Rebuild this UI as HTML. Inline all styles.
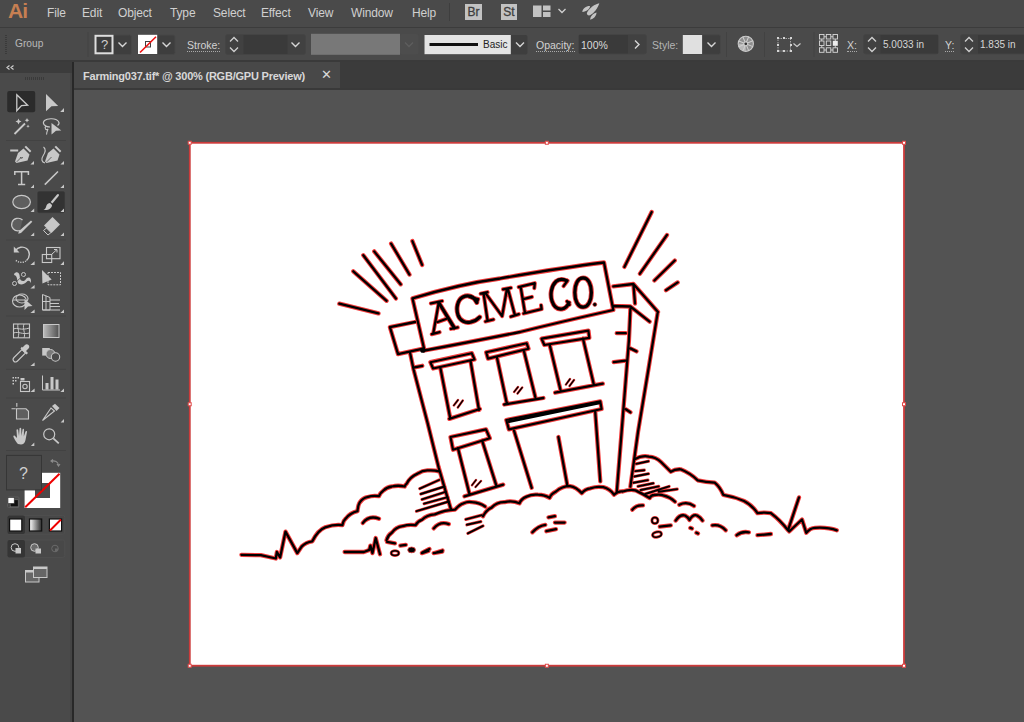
<!DOCTYPE html>
<html><head><meta charset="utf-8">
<style>
*{margin:0;padding:0;box-sizing:border-box}
html,body{width:1024px;height:722px;overflow:hidden;background:#535353;font-family:"Liberation Sans",sans-serif}
.a{position:absolute}
#menubar{left:0;top:0;width:1024px;height:27px;background:#4a4a4a}
#menusep{left:0;top:27px;width:1024px;height:1px;background:#3c3c3c}
#ctrl{left:0;top:28px;width:1024px;height:33px;background:#4a4a4a}
#ctrlsep{left:0;top:60px;width:1024px;height:2px;background:#3a3a3a}
.menu{top:6px;font-size:12px;letter-spacing:-0.15px;color:#d0d0d0;white-space:nowrap}
#tabbar{left:74px;top:62px;width:950px;height:27px;background:#3b3b3b}
#tab{left:74px;top:62px;width:266px;height:27px;background:#484848}
#tabline{left:74px;top:88px;width:950px;height:2px;background:#393939}
#canvas{left:74px;top:90px;width:950px;height:632px;background:#535353}
#tools{left:0;top:62px;width:72px;height:660px;background:#4a4a4a}
#toolshead{left:0;top:62px;width:72px;height:11px;background:#3c3c3c}
#toolsborder{left:72px;top:62px;width:2px;height:660px;background:#282828}
.ul{border-bottom:1px dotted #aaa;line-height:12px}
</style></head><body>
<div class="a" id="menubar"></div>
<div class="a" id="menusep"></div>
<div class="a" id="ctrl"></div>
<div class="a" id="ctrlsep"></div>
<div class="a" id="tabbar"></div>
<div class="a" id="tab"></div>
<div class="a" id="tabline"></div>
<div class="a" id="canvas"></div>
<div class="a" id="tools"></div>
<div class="a" id="toolshead"></div>
<div class="a" id="toolsborder"></div>
<div class="a" style="left:70px;top:73px;width:2px;height:649px;background:#444"></div>

<!-- menu -->
<div class="a" style="left:8px;top:-1px;font-size:21px;font-weight:bold;color:#c67f52;letter-spacing:-0.8px">Ai</div>
<div class="a menu" style="left:47px">File</div>
<div class="a menu" style="left:82px">Edit</div>
<div class="a menu" style="left:118px">Object</div>
<div class="a menu" style="left:170px">Type</div>
<div class="a menu" style="left:213px">Select</div>
<div class="a menu" style="left:261px">Effect</div>
<div class="a menu" style="left:308px">View</div>
<div class="a menu" style="left:351px">Window</div>
<div class="a menu" style="left:412px">Help</div>


<!-- menubar icons -->
<div class="a" style="left:449px;top:3px;width:1px;height:18px;background:#3e3e3e"></div>
<div class="a" style="left:465px;top:4px;width:17px;height:16px;background:#c2c2c2;color:#3e3e3e;font-size:12px;text-align:center;line-height:16px;-webkit-text-stroke:0.3px #3e3e3e">Br</div>
<div class="a" style="left:501px;top:4px;width:16px;height:16px;background:#c2c2c2;color:#3e3e3e;font-size:12px;text-align:center;line-height:16px;-webkit-text-stroke:0.3px #3e3e3e">St</div>
<svg class="a" style="left:530px;top:2px" width="75" height="22">
 <rect x="3" y="3.5" width="8.5" height="11.5" fill="#c2c2c2"/>
 <rect x="13" y="3.5" width="7.5" height="5" fill="#c2c2c2"/>
 <rect x="13" y="10" width="7.5" height="5" fill="#c2c2c2"/>
 <path d="M28.5 7 L32 10.5 L35.5 7" stroke="#d0d0d0" stroke-width="1.3" fill="none"/>
 <path d="M69.3 1.2 C65 2 59 6 57 10.7 C56.5 12 57.5 13.8 60 13.3 C64 11 68 6 69.3 1.2 Z" fill="#c4c4c4"/>
 <path d="M52.3 9.9 C52.8 6.5 56 4 60 4.1 C59.8 7.2 56.5 9.9 52.3 9.9 Z" fill="#c4c4c4"/>
 <path d="M60.2 17.8 C60.2 14.5 63 11.5 66.5 10.6 C66.5 14 63.5 17.2 60.2 17.8 Z" fill="#c4c4c4"/>
</svg>

<!-- control bar -->
<svg class="a" style="left:0;top:28px" width="1024" height="33">
 <g fill="#3a3a3a"><rect x="5" y="7" width="2" height="1"/><rect x="5" y="9" width="2" height="1"/><rect x="5" y="11" width="2" height="1"/><rect x="5" y="13" width="2" height="1"/><rect x="5" y="15" width="2" height="1"/><rect x="5" y="17" width="2" height="1"/><rect x="5" y="19" width="2" height="1"/><rect x="5" y="21" width="2" height="1"/><rect x="5" y="23" width="2" height="1"/><rect x="5" y="25" width="2" height="1"/></g>
 <rect x="87.5" y="4" width="1" height="25" fill="#424242"/>
 <!-- fill swatch -->
 <rect x="94.5" y="7" width="37" height="19.5" rx="2" fill="#3e3e3e" stroke="#464646" stroke-width="1"/>
 <rect x="95.5" y="7.8" width="17" height="17.5" fill="#3c3c3c" stroke="#dedede" stroke-width="2"/>
 <path d="M118.5 14.5 L122.5 18.5 L126.5 14.5" stroke="#d6d6d6" stroke-width="1.4" fill="none"/>
 <!-- stroke swatch -->
 <rect x="138" y="7" width="37" height="19.5" rx="2" fill="#3e3e3e" stroke="#464646" stroke-width="1"/>
 <rect x="138" y="6.8" width="19.2" height="19.2" fill="#ffffff"/>
 <rect x="145.5" y="13.5" width="5" height="5.5" fill="none" stroke="#404040" stroke-width="1"/>
 <path d="M140 24.5 L156 8.8" stroke="#ee1111" stroke-width="1.6"/>
 <path d="M162.5 14.5 L166.5 18.5 L170.5 14.5" stroke="#d6d6d6" stroke-width="1.4" fill="none"/>
 <!-- stroke spinner -->
 <rect x="225.5" y="6.5" width="80" height="20" rx="2.5" fill="#414141" stroke="#444" stroke-width="1"/>
 <rect x="243.5" y="7" width="44" height="19" fill="#3a3a3a"/>
 <path d="M230 13.5 L234 9.5 L238 13.5 M230 19.5 L234 23.5 L238 19.5" stroke="#d0d0d0" stroke-width="1.3" fill="none"/>
 <path d="M291.5 14.5 L295.5 18.5 L299.5 14.5" stroke="#d6d6d6" stroke-width="1.4" fill="none"/>
 <rect x="311" y="5.8" width="89" height="21" fill="#787878"/>
 <rect x="400" y="6" width="18.5" height="20.5" rx="2" fill="#4d4d4d"/>
 <path d="M405 14.5 L409 18.5 L413 14.5" stroke="#5e5e5e" stroke-width="1.3" fill="none"/>
 <!-- brush -->
 <rect x="424.5" y="7" width="103" height="19.5" rx="2" fill="#3e3e3e"/>
 <rect x="424.5" y="7" width="86.3" height="19.2" fill="#e4e4e4"/>
 <rect x="429.5" y="15" width="48.5" height="3" fill="#111"/>
 <path d="M516 14.5 L520 18.5 L524 14.5" stroke="#d6d6d6" stroke-width="1.4" fill="none"/>
 <!-- opacity -->
 <rect x="578.5" y="6.5" width="68" height="19.5" rx="2.5" fill="#414141" stroke="#444" stroke-width="1"/>
 <rect x="579" y="7" width="49" height="18.5" fill="#3a3a3a"/>
 <path d="M635 12.5 L639 16.5 L635 20.5" stroke="#d6d6d6" stroke-width="1.4" fill="none"/>
 <!-- style -->
 <rect x="682.5" y="6.8" width="38" height="19.5" rx="2" fill="#3e3e3e" stroke="#464646" stroke-width="1"/>
 <rect x="682.8" y="7" width="19.3" height="19" fill="#e0e0e0"/>
 <path d="M707.5 14.5 L711.5 18.5 L715.5 14.5" stroke="#d6d6d6" stroke-width="1.4" fill="none"/>
 <rect x="726" y="4" width="1" height="25" fill="#424242"/>
 <!-- globe -->
 <circle cx="745.8" cy="15.8" r="7.6" fill="#8e8e8e" stroke="#cccccc" stroke-width="1.1"/>
 <path d="M745.8 15.8 L738.4 15.8 A7.4 7.4 0 0 0 740.6 21.1 Z M745.8 15.8 L740.6 21.1 A7.4 7.4 0 0 0 745.8 23.2 Z" fill="#b8b8b8"/>
 <g stroke="#cfcfcf" stroke-width="1" transform="rotate(22 745.8 15.8)">
  <path d="M745.8 15.8 L745.8 8.2 M745.8 15.8 L751.2 10.4 M745.8 15.8 L753.4 15.8 M745.8 15.8 L751.2 21.2 M745.8 15.8 L745.8 23.4 M745.8 15.8 L740.4 21.2 M745.8 15.8 L738.2 15.8 M745.8 15.8 L740.4 10.4"/>
 </g>
 <circle cx="745.8" cy="15.8" r="2.4" fill="#cfcfcf"/>
 <circle cx="745.8" cy="15.8" r="1.4" fill="#333"/>
 <rect x="764" y="4" width="1" height="25" fill="#424242"/>
 <!-- transform icon -->
 <rect x="778" y="38.5" width="12.5" height="12.5" fill="none" stroke="#bdbdbd" stroke-width="0.8" stroke-dasharray="1.5 1" transform="translate(0,-28)"/>
 <g fill="#d4d4d4"><rect x="777" y="9" width="2" height="2"/><rect x="783" y="9" width="2" height="2"/><rect x="790" y="9" width="2" height="2"/><rect x="777" y="16" width="2" height="2"/><rect x="790" y="16" width="2" height="2"/><rect x="777" y="22" width="2" height="2"/><rect x="783" y="22" width="2" height="2"/><rect x="790" y="22" width="2" height="2"/></g>
 <path d="M793.5 15.5 L797 18.5 L800.5 15.5" stroke="#cfcfcf" stroke-width="1.1" fill="none"/>
 <rect x="813.5" y="4" width="1" height="25" fill="#424242"/>
 <!-- ref point -->
 <g fill="none" stroke="#d8d8d8" stroke-width="0.9">
  <rect x="819.5" y="6.5" width="4.5" height="4.5"/><rect x="826.3" y="6.5" width="4.5" height="4.5"/><rect x="833" y="6.5" width="4.5" height="4.5"/>
  <rect x="819.5" y="13" width="4.5" height="4.5"/><rect x="826.3" y="13" width="4.5" height="4.5"/>
  <rect x="819.5" y="19.8" width="4.5" height="4.5"/><rect x="826.3" y="19.8" width="4.5" height="4.5"/><rect x="833" y="19.8" width="4.5" height="4.5"/>
  <path d="M824 8.75 H826.3 M830.8 8.75 H833 M824 22 H826.3 M830.8 22 H833 M821.75 11 V13 M821.75 17.5 V19.8 M835.25 11 V13 M835.25 17.5 V19.8"/>
 </g>
 <rect x="832.8" y="12.8" width="5" height="5" fill="#ececec"/>
 <!-- X -->
 <rect x="863.5" y="6.5" width="75" height="19.5" rx="2.5" fill="#414141" stroke="#444" stroke-width="1"/>
 <rect x="880.5" y="7" width="57.5" height="18.5" fill="#3a3a3a"/>
 <path d="M868 13.5 L872 9.5 L876 13.5 M868 19.5 L872 23.5 L876 19.5" stroke="#d0d0d0" stroke-width="1.3" fill="none"/>
 <!-- Y -->
 <rect x="960.5" y="6.5" width="75" height="19.5" rx="2.5" fill="#414141" stroke="#444" stroke-width="1"/>
 <rect x="978" y="7" width="57.5" height="18.5" fill="#3a3a3a"/>
 <path d="M965 13.5 L969 9.5 L973 13.5 M965 19.5 L969 23.5 L973 19.5" stroke="#d0d0d0" stroke-width="1.3" fill="none"/>
</svg>
<div class="a" style="left:15px;top:38px;font-size:10.2px;color:#b8b8b8">Group</div>
<div class="a" style="left:99px;top:37px;width:11px;text-align:center;font-size:13px;color:#d0d0d0">?</div>
<div class="a ul" style="left:187px;top:39px;font-size:10.5px;color:#d2d2d2">Stroke:</div>
<div class="a" style="left:483px;top:39px;font-size:10px;color:#222">Basic</div>
<div class="a ul" style="left:536px;top:39px;font-size:10.5px;color:#d2d2d2">Opacity:</div>
<div class="a" style="left:581px;top:39px;font-size:10.5px;color:#dadada">100%</div>
<div class="a" style="left:652px;top:39px;font-size:10.5px;color:#b4b4b4">Style:</div>
<div class="a ul" style="left:847px;top:39px;font-size:10.5px;color:#d2d2d2">X:</div>
<div class="a" style="left:883px;top:39px;font-size:10px;color:#d6d6d6">5.0033 in</div>
<div class="a ul" style="left:945px;top:39px;font-size:10.5px;color:#d2d2d2">Y:</div>
<div class="a" style="left:980px;top:39px;font-size:10px;color:#d6d6d6">1.835 in</div>

<!-- tab -->
<div class="a" style="left:83px;top:70px;font-size:11px;font-weight:bold;letter-spacing:-0.22px;color:#d8d8d8;white-space:nowrap">Farming037.tif* @ 300% (RGB/GPU Preview)</div>
<div class="a" style="left:321px;top:67px;font-size:13px;color:#d8d8d8">&#x2715;</div>


<!-- tools panel -->
<svg class="a" style="left:0;top:0" width="74" height="722">
 <path d="M9.5 65.5 L7 67.5 L9.5 69.5 M13.5 65.5 L11 67.5 L13.5 69.5" stroke="#cfcfcf" stroke-width="1.2" fill="none"/>
 <g fill="#3a3a3a"><rect x="25" y="77" width="1" height="3"/><rect x="27" y="77" width="1" height="3"/><rect x="29" y="77" width="1" height="3"/><rect x="31" y="77" width="1" height="3"/><rect x="33" y="77" width="1" height="3"/><rect x="35" y="77" width="1" height="3"/><rect x="37" y="77" width="1" height="3"/><rect x="39" y="77" width="1" height="3"/><rect x="41" y="77" width="1" height="3"/><rect x="43" y="77" width="1" height="3"/></g>
 <!-- selected tool bg -->
 <rect x="7.2" y="91" width="28" height="21.3" rx="2" fill="#2b2b2b"/>
 <rect x="37" y="190.9" width="28.2" height="22.3" rx="2" fill="#333333" stroke="#4e4e4e" stroke-width="0.8"/>
 <g fill="#c8c8c8" stroke="none">
  <!-- corner triangles -->
  <path d="M64 108 L64 112 L60.2 112 Z"/>
  <path d="M34 161 L34 164.6 L30.4 164.6 Z"/><path d="M64 161 L64 164.6 L60.4 164.6 Z"/>
  <path d="M34 184.6 L34 188 L30.6 188 Z"/><path d="M64 184.6 L64 188 L60.4 188 Z"/>
  <path d="M34.2 208.5 L34.2 212.1 L30.6 212.1 Z"/><path d="M64 208.5 L64 212.1 L60.5 212.1 Z"/>
  <path d="M34.2 232.5 L34.2 236 L30.6 236 Z"/><path d="M64 232.5 L64 236 L60.5 236 Z"/>
  <path d="M34.6 261.3 L34.6 264.9 L30.4 264.9 Z"/><path d="M64 261.3 L64 264.9 L60.4 264.9 Z"/>
  <path d="M34.6 285 L34.6 288.6 L30.4 288.6 Z"/>
  <path d="M34.6 309.5 L34.6 313 L30.4 313 Z"/><path d="M64 309.5 L64 313 L60.4 313 Z"/>
  <path d="M34.6 362.5 L34.6 366 L30.4 366 Z"/>
  <path d="M34.6 388.5 L34.6 392 L30.4 392 Z"/><path d="M64 388.5 L64 392 L60.4 392 Z"/>
  <path d="M64 419 L64 422.4 L60.6 422.4 Z"/>
  <path d="M34.3 442.6 L34.3 446 L30.9 446 Z"/>
 </g>
 <!-- separators -->
 <g fill="#424242"><rect x="6" y="140" width="60" height="1"/><rect x="6" y="239.5" width="60" height="1"/><rect x="6" y="315.5" width="60" height="1"/><rect x="6" y="368.8" width="60" height="1"/><rect x="6" y="397.5" width="60" height="1"/><rect x="6" y="450" width="60" height="1"/></g>
 <!-- selection -->
 <path d="M16.8 94.8 L27.6 105.2 L21.5 105.6 L16.8 110.8 Z" fill="none" stroke="#cacaca" stroke-width="1.3" stroke-linejoin="miter"/>
 <path d="M46 94 L58.2 106 L51.5 106.2 L46 111.2 Z" fill="#c8c8c8"/>
 <!-- magic wand -->
 <path d="M14.5 134 L25 123.5" stroke="#c8c8c8" stroke-width="1.8"/>
 <path d="M18.5 118.5 L19.4 120.6 L21.5 121.5 L19.4 122.4 L18.5 124.5 L17.6 122.4 L15.5 121.5 L17.6 120.6 Z M27 118 L27.7 119.6 L29.3 120.3 L27.7 121 L27 122.6 L26.3 121 L24.7 120.3 L26.3 119.6 Z M28 124.5 L28.5 125.7 L29.7 126.2 L28.5 126.7 L28 127.9 L27.5 126.7 L26.3 126.2 L27.5 125.7 Z" fill="#c8c8c8"/>
 <!-- lasso -->
 <path d="M50 127 C44 127 42 123 44.5 120.5 C47.5 118 56 118 58.5 121.5 C59.5 123 59 124.5 57.5 125.5" stroke="#c8c8c8" stroke-width="1.1" fill="none"/>
 <path d="M46 126 C44 128 46 131 48 129 C47 132 46 134 47 134.5" stroke="#c8c8c8" stroke-width="1.1" fill="none"/>
 <path d="M51.5 123 L61.3 130.5 L56 130.8 L51.5 134.5 Z" fill="#c8c8c8"/>
 <!-- pen -->
 <rect x="10.2" y="149.5" width="8" height="2" fill="#c8c8c8"/>
 <path d="M24.5 147 L26 145.7 L31.3 151 L30 152.5 Z" fill="#c8c8c8"/>
 <path d="M23.5 148.5 L29.5 154.5 L27.5 160.5 L16.5 163 L15 161.5 L18 153 Z" fill="#c8c8c8"/>
 <path d="M16.8 161.8 L21.5 157 M21.5 157 m-0.8 0 a0.9 0.9 0 1 0 1.6 0" stroke="#4a4a4a" stroke-width="0.8" fill="none"/>
 <!-- curvature pen -->
 <path d="M43.5 147 C46 149 45 153 43 156 C41 159 41.5 162 45 163" stroke="#c8c8c8" stroke-width="1.1" fill="none"/>
 <path d="M54.5 147 L56 145.7 L61.3 151 L60 152.5 Z" fill="#c8c8c8"/>
 <path d="M53.5 148.5 L59.5 154.5 L57.5 160.5 L46.5 163 L45 161.5 L48 153 Z" fill="#c8c8c8"/>
 <path d="M46.8 161.8 L51.5 157" stroke="#4a4a4a" stroke-width="0.8" fill="none"/>
 <!-- type -->
 <path d="M14.8 175 V171.8 H28.4 V175 M21.6 171.8 V184.5 M18 184.5 H25.2" stroke="#c8c8c8" stroke-width="1.5" fill="none"/>
 <!-- line -->
 <path d="M44.8 184.6 L58 171.5" stroke="#c8c8c8" stroke-width="1.5"/>
 <!-- ellipse -->
 <ellipse cx="21.6" cy="202" rx="8.8" ry="6.6" fill="#5e5e5e" stroke="#c8c8c8" stroke-width="1.2"/>
 <!-- brush -->
 <path d="M58 194 C59 194 59.3 195 58.6 196 L52.5 203.5 L50.7 202 L57 194.5 Z" fill="#c8c8c8"/>
 <path d="M50 203 L52 205 C52 208 49 210.5 43.5 210 C45.5 209 45.8 207.5 46.5 205.5 C47 204 48.5 203 50 203 Z" fill="#c8c8c8"/>
 <!-- shaper -->
 <path d="M20 230.5 C14 232 10.5 227 12 222.5 C13.5 218 19.5 217 22.5 220" stroke="#c8c8c8" stroke-width="1.2" fill="#5e5e5e"/>
 <path d="M31 220.5 L32.3 221.8 L21 233 L18.2 233.8 L19 231 Z" fill="#c8c8c8"/>
 <!-- eraser -->
 <path d="M52.5 217 L60 224.5 L51.5 233 L44 225.5 Z" fill="#c8c8c8"/>
 <path d="M46.5 228 L51 232.5 L48 235 L43.5 230.5 Z" fill="none" stroke="#c8c8c8" stroke-width="1"/>
 <!-- rotate -->
 <path d="M15.5 250.5 C18 247 23 246 26.5 248.5 C30.5 251.5 30 257.5 26.5 260.5" stroke="#c8c8c8" stroke-width="1.4" fill="none"/>
 <path d="M26 261 C23 263 18 263 15 259.5" stroke="#c8c8c8" stroke-width="1.4" fill="none" stroke-dasharray="1.2 1.2"/>
 <path d="M13.8 246.5 L13.8 252.5 L19.5 252.5 Z" fill="#c8c8c8"/>
 <!-- scale -->
 <rect x="46.5" y="247.5" width="13.5" height="11.2" fill="none" stroke="#c8c8c8" stroke-width="1.1"/>
 <rect x="42.3" y="254.5" width="9.4" height="8" fill="none" stroke="#c8c8c8" stroke-width="1.1"/>
 <path d="M52 254 L57 249.5 M54 249.5 H57 V252.5" stroke="#c8c8c8" stroke-width="1" fill="none"/>
 <!-- puppet -->
 <path d="M14 274 C16 271 19 272 19.5 275 C20 278 20 281 23 281 C26 281 26 277 29 277.5 C31 278 31.5 281 30.5 283 C30 280.5 28 280 26.5 282 C24 285 19 285 18 283 C17 281 17.5 278 16 276 C15 275 14 275.5 14 274 Z" fill="#c8c8c8"/>
 <circle cx="23.5" cy="274.5" r="2" fill="none" stroke="#c8c8c8" stroke-width="1"/>
 <circle cx="14.5" cy="283.5" r="2" fill="none" stroke="#c8c8c8" stroke-width="1"/>
 <path d="M15.5 282.5 L23 275.5" stroke="#4a4a4a" stroke-width="0.8"/>
 <!-- free transform -->
 <path d="M42 270 L51.7 279.5 L42.4 283.6 Z" fill="#c8c8c8"/>
 <rect x="48" y="272.5" width="12.5" height="12.3" fill="none" stroke="#c8c8c8" stroke-width="1" stroke-dasharray="2 1"/>
 <!-- shape builder -->
 <ellipse cx="19.5" cy="301" rx="7" ry="6" fill="none" stroke="#c8c8c8" stroke-width="1.1"/>
 <ellipse cx="22" cy="298.5" rx="6" ry="4.5" fill="none" stroke="#c8c8c8" stroke-width="1.1"/>
 <path d="M13 300 H25" stroke="#c8c8c8" stroke-width="1"/>
 <path d="M24.5 299 L32.5 306 L28 306.5 L24.5 310 Z" fill="#c8c8c8"/>
 <!-- perspective grid -->
 <path d="M42.5 294.5 L50 297.5 L50 310 L42.5 310 Z M42.5 301.5 H50 M46 295.8 V310 M50 300 H60 M50 303.5 H59 M50 306.5 H60 M42.5 310 H60" stroke="#c8c8c8" stroke-width="1" fill="none"/>
 <!-- mesh -->
 <rect x="13.5" y="324" width="16" height="13.8" fill="none" stroke="#c8c8c8" stroke-width="1.1"/>
 <path d="M13.5 329 C18 327 20 331 29.5 328 M13.5 333 C19 331 22 335 29.5 333 M18 324 C17 328 20 332 18 337.8 M24 324 C22 329 26 333 24 337.8" stroke="#c8c8c8" stroke-width="1" fill="none"/>
 <!-- gradient -->
 <defs><linearGradient id="gr" x1="0" x2="1" y1="0" y2="0"><stop offset="0" stop-color="#bcbcbc"/><stop offset="1" stop-color="#505050"/></linearGradient>
 <linearGradient id="gr2" x1="0" x2="1" y1="0" y2="0"><stop offset="0" stop-color="#ffffff"/><stop offset="1" stop-color="#2a2a2a"/></linearGradient></defs>
 <rect x="43.5" y="324.5" width="15.5" height="13" fill="url(#gr)" stroke="#c8c8c8" stroke-width="1"/>
 <!-- eyedropper -->
 <path d="M14 361.5 C12.5 360 13 358.5 14 357.5 L22 349.5 L25.5 353 L17.5 361 C16.5 362 15 362.5 14 361.5 Z" fill="none" stroke="#c8c8c8" stroke-width="1.1"/>
 <path d="M20.5 348.5 L26.5 354.5 L28 353 L26 351 L28.5 348.5 C29.5 347.5 29.5 346 28.5 345 C27.5 344 26 344 25 345 L22.5 347.5 L21.8 346.8 Z" fill="#c8c8c8"/>
 <!-- blend -->
 <rect x="42.2" y="348" width="7.6" height="7.6" fill="#c8c8c8"/>
 <circle cx="50.5" cy="354" r="4.5" fill="#7a7a7a" stroke="#c8c8c8" stroke-width="1"/>
 <circle cx="55.5" cy="357" r="4.2" fill="#4a4a4a" stroke="#c8c8c8" stroke-width="1.1"/>
 <!-- symbol sprayer -->
 <g fill="#c8c8c8"><rect x="12.5" y="377" width="1.5" height="1.5"/><rect x="15" y="377" width="1.5" height="1.5"/><rect x="17.5" y="377" width="1.5" height="1.5"/><rect x="12.5" y="380" width="1.5" height="1.5"/><rect x="15" y="380" width="1.5" height="1.5"/><rect x="12.5" y="383" width="1.5" height="1.5"/></g>
 <rect x="20.5" y="378" width="4" height="2.5" fill="#c8c8c8"/>
 <rect x="20.5" y="381.5" width="9" height="10" fill="none" stroke="#c8c8c8" stroke-width="1.1"/>
 <circle cx="25" cy="386.5" r="2.2" fill="none" stroke="#c8c8c8" stroke-width="1.1"/>
 <!-- graph -->
 <path d="M42.5 375.5 V390 H60" stroke="#c8c8c8" stroke-width="1" fill="none"/>
 <rect x="45.5" y="383" width="3" height="6.5" fill="#c8c8c8"/><rect x="50.5" y="377" width="3" height="12.5" fill="#c8c8c8"/><rect x="55.5" y="379.5" width="3" height="10" fill="#c8c8c8"/>
 <!-- artboard -->
 <path d="M16.5 408.8 H26 L28.5 411.3 V419 H16.5 Z" fill="#5e5e5e" stroke="#c8c8c8" stroke-width="1.1"/>
 <path d="M11.5 408.7 H15.7 M16.8 403 V406.8" stroke="#c8c8c8" stroke-width="1.1"/>
 <!-- slice -->
 <path d="M42.5 420.5 L51 408 L54.5 411 Z" fill="none" stroke="#c8c8c8" stroke-width="1.1"/>
 <path d="M52 406 L55 403.8 L59.5 408 L56.5 411 Z" fill="#c8c8c8"/>
 <!-- hand -->
 <path d="M18 444 C16 442 14 438 13.5 437 C13 436 14 435 15 436 L17 438 L16.5 430 C16.5 429 18 429 18.2 430 L19 436 L19.5 428.5 C19.6 427.5 21 427.5 21.2 428.5 L21.5 436 L22.5 429.5 C22.7 428.5 24 428.5 24 429.5 L23.8 436.5 L25.5 431.5 C26 430.5 27.3 431 27 432 L25.5 440 C25 443 23 444.5 21 444.5 Z" fill="#c8c8c8"/>
 <!-- zoom -->
 <circle cx="49.2" cy="434.3" r="5.5" fill="none" stroke="#c8c8c8" stroke-width="1.2"/>
 <path d="M53.3 438.4 L58.8 443.4" stroke="#c8c8c8" stroke-width="1.8"/>
 <!-- fill/stroke -->
 <rect x="24.6" y="472.8" width="35.6" height="35.2" fill="#ffffff"/>
 <rect x="35" y="483" width="15" height="15" fill="#4a4a4a"/>
 <path d="M25.2 507.3 L59.5 473.7" stroke="#ee0000" stroke-width="2"/>
 <rect x="6.5" y="455.4" width="35" height="34.5" fill="#494949" stroke="#363636" stroke-width="1"/>
 <path d="M53 459.5 L51 461 L53 462.5 M51.5 461 C55 460.5 58 461.5 58.5 465.5 M57 464 L58.5 466 L60 464" stroke="#8c8c8c" stroke-width="1.1" fill="none"/>
 <rect x="7.5" y="497" width="11.5" height="10.5" rx="1" fill="none" stroke="#5a5a5a" stroke-width="1"/>
 <rect x="10.2" y="499.8" width="8" height="7" fill="#111" stroke="#777" stroke-width="0.6"/>
 <rect x="8" y="497.6" width="6.2" height="5.8" fill="#ffffff" stroke="#333" stroke-width="0.6"/>
 <!-- color row -->
 <rect x="7.4" y="515.4" width="57.4" height="18.7" rx="2" fill="#484848" stroke="#505050" stroke-width="0.8"/>
 <rect x="7.4" y="515.4" width="17.6" height="18.7" rx="2" fill="#353535"/>
 <rect x="9.6" y="519" width="12.2" height="12" fill="#fff" stroke="#111" stroke-width="1.2"/>
 <rect x="29.5" y="519" width="12.2" height="12" fill="url(#gr2)" stroke="#111" stroke-width="1.2"/>
 <rect x="49.4" y="519" width="12.2" height="12" fill="#fff" stroke="#111" stroke-width="1.2"/>
 <path d="M50 530.5 L61 519.5" stroke="#ee0000" stroke-width="2"/>
 <!-- draw mode row -->
 <rect x="7.4" y="540" width="57.4" height="17.4" rx="2" fill="#484848" stroke="#505050" stroke-width="0.8"/>
 <rect x="7.4" y="540" width="17.6" height="17.4" rx="2" fill="#353535"/>
 <circle cx="15" cy="547.5" r="3.8" fill="none" stroke="#c8c8c8" stroke-width="1"/>
 <rect x="15.5" y="548" width="5.5" height="5.5" fill="#c8c8c8"/>
 <circle cx="34.5" cy="547.5" r="3.8" fill="#6a6a6a" stroke="#c8c8c8" stroke-width="1"/>
 <rect x="35.5" y="548.5" width="5.5" height="5" fill="#c8c8c8"/>
 <circle cx="55" cy="548.5" r="3.3" fill="none" stroke="#6a6a6a" stroke-width="1"/>
 <path d="M55 548.5 H58.3 A3.3 3.3 0 0 1 55 551.8 Z" fill="#6a6a6a"/>
 <!-- screen mode -->
 <rect x="25.5" y="570.5" width="13.5" height="11.5" fill="#666" stroke="#c8c8c8" stroke-width="1"/>
 <rect x="33.5" y="567" width="13.5" height="10.5" fill="#666" stroke="#c8c8c8" stroke-width="1"/>
 <rect x="33.5" y="567" width="13.5" height="2" fill="#c8c8c8"/>
 <rect x="25.5" y="570.5" width="8" height="2" fill="#c8c8c8"/>
</svg>
<div class="a" style="left:19px;top:465px;font-size:16px;color:#cfcfcf">?</div>

<!-- artboard -->
<div class="a" style="left:190px;top:143px;width:714px;height:522px;background:#fff"></div>
<!-- drawing -->
<svg class="a" style="left:0;top:0" width="1024" height="722" viewBox="0 0 1024 722">
 <defs>
  <path id="ln" d="
M339.3 303.7 L378.5 313.4
M353.3 271.3 L386.6 300.8
M363.3 255.2 L395.9 298.5
M374.2 251.4 L400.7 284.3
M391.1 243.6 L409.5 274.6
M412.4 241.1 L422.1 264.9
M651.7 212 L624.4 266.9
M667 234.9 L639.9 273.7
M674.8 260.5 L654.4 280.5
M677.7 282.4 L666 290.2
M412.5 298.4 Q460 284 500 278.5 Q560 268 604 262.5 L613.3 310 Q560 322 520 332 Q470 342 424.5 350.5 Z
M415 322 L389.9 327.1 L398 354.1 L423.2 348.7
M613.3 286.3 L633.4 284 L635 303.5
M613.7 306 L630.4 306.5 L649.6 321.6
M633.4 284 L658 312
M657.8 311.9 L648.6 368.2 L638 432 L630.4 486.7
M630.4 308.9 L628.9 340.8 L622.8 416.9 L616.7 492.9
M616.7 333.2 L625.8 333.2
M630.4 348.4 L636.5 351.4
M613.7 362.1 L625.8 360.6
M625.8 409.2 L630.4 412.3
M410 352.5 L413.7 370 L427.4 422.3 L438.6 467.2 L451 509.6
M413.3 367.6 L422.3 365.8
M440.3 367.6 L450.2 418
M470.5 361 L479 410
M449.3 418.9 L479.9 409
M497 357.7 L506.9 403.6
M524 351.4 L535.3 397
M504.2 404.5 L543.4 398
M549.7 345 L560.5 390
M583 338.7 L593.8 384.6
M555.1 392.7 L602.8 383.7
M458 448.4 L469.5 494.1
M482.2 440.8 L496.2 485.2
M464.5 496.3 L503.2 484.6
M514 430.6 L531.7 487.8
M558.4 437 L567.3 485.2
M595.2 411.6 L600.3 481.4
M241.4 554.8 L260.8 555.2 L275.8 558.5 L276.9 552 L280.1 557.4 L285.5 531.6 L297.3 553.1 L301.6 546.6 Q306 542 312.3 541.3 Q318 530 325.2 527.3 Q335 524 342.4 525.2 Q343 521 345.6 518.7 Q350 513 357.5 511.2 Q358 505 359.6 502.6 Q363 498 367.1 497.2 Q373 495 379 496.2 Q380 493 383.2 490.8 Q387 487 391.8 486.5 Q398 485 404.7 486.5 Q405 485 406.9 483.3 Q410 477 417.6 473.6 Q423 470 428.4 470.4 Q434 470 439.1 471.4
M362.8 523 Q369 515 379 518.7
M386.5 540.2 Q388 535 391.8 532.7 Q396 527 402.6 526.2 Q409 524 415.5 525.2 Q418 521 421.9 519.8 Q427 515 434.8 514.4 Q445 510 455 509.7 Q460 504 463.6 503.3 Q468 501 472.2 502.2 Q480 503 485.1 506.5
M433.7 528.4 Q440 521 448.8 524.1
M344.6 552 L363.9 552 L369.3 549.9 L370.4 545.6 L372.5 553.1 L375.7 538 L380 554.2
M387.1 541.9 L395 543.4
M400.4 545.6 L405.8 544.9
M421.9 553.1 L428.4 551
M433.7 553.1 L442.3 551.6
M483 516.2 Q486 510 491.6 507.6 Q497 502 504.5 502.2 Q512 500 519.5 503.3 Q521 499 526 496.9 Q532 494 537.8 494.7 Q545 495 549.6 497.9 Q551 494 556 491.5 Q562 486 570 486.1 Q576 487 581.8 493.2 Q585 489 590.4 488.3 Q597 486 603.3 487.2 Q610 489 614 494.7 Q618 491 622.6 491.5 Q630 489 635.5 490.4 Q643 494 649.7 498.1 Q651 495 654.2 495 Q660 494 663.2 495.4 Q670 497 675 501.7
M532.4 532.3 Q538 526 545.3 524.8
M546.4 531.2 L556 529.1
M548.5 517.3 L554.9 516.2
M554.9 522.6 L564.6 522.6
M632.3 509.7 Q636 505 643 505.4
M422.3 552.6 L429.4 549
M434.5 553 L442.5 550.5
M634.2 459.5 Q642 455 648.8 456.6 Q656 457 661 462 Q666 467 670.8 471.7 Q675 469 680.6 469.3 Q690 473 697.7 480.3 Q706 482 714.7 482.7 Q720 487 723.3 494.9 Q735 497 744 501 Q752 505 757.5 513.2 Q765 512 770.9 513.2 Q780 520 788 530.3 L799 497.4
M789.2 531.5 L802 519.5 L806.3 532.8 Q810 528 815 527.8 Q828 527 836.8 530.3
M679.3 504.7 Q687 501 694 505.9
M675.7 520.6 Q680 514 685 515.5 Q688 517 689.5 520 Q693 514 697 515.5 Q700 517 702.5 520.6
M712.3 525.4 Q720 524 725.7 530.3
M736.7 535.2 Q742 531 748.9 532.3
M757.5 535.2 L770.9 534
M659.8 526.7 L670.8 525.4
M690.3 527.9 L692 528.5
M696.4 532.8 L698 533.5"/>
  <path id="cp" d="
M430.4 362.2 L471.8 353.2 L474.5 359.5 L433.1 368.5 Z
M486.2 352.3 L526.7 343.3 L528.5 348.7 L488 358.6 Z
M541.6 338.7 L588.4 330.6 L589.3 337.8 L544.3 345 Z
M450.5 437 L486 429.4 L489.8 438.2 L453 449.7 Z
M506.3 420 L600.3 401.4 L601.6 409 L508.9 429.4 Z"/>
  <path id="ht" d="
M439.1 480 L419.8 488.6 M444.5 486.5 L420.8 494 M445.5 491.9 L422 499.4 M447.7 497.2 L424.1 503.7 M448.8 501.5 L416.5 511.2
M481.9 515.1 L465.8 519.4 M480.8 521.6 L466.9 524.8 M483 525.9 L467.9 533.4
M636.2 463.9 L648.4 461.2 M635.3 471.1 L644.3 470.2 M634.4 476.5 L648.4 473.8 M633.5 482.8 L647.9 480.1 M638 486.4 L653.3 483.3 M640.7 490 L658.7 486.4 M645.2 494 L669.1 486.4 M658.7 491.8 L677.2 489.1"/>
  <path id="ci" d="M509 421.7 L599.5 402.9"/>
  <path id="gl" d="M453.8 405.4 L458 400 M457.8 407.5 L462.8 400.5 M514.1 391.9 L518 387 M517.5 393.5 L522.2 387.5 M565.9 384.6 L570 379 M569.5 386 L574 380 M472 485.2 L476 480 M475.5 487 L481 481"/>
  <g id="dots">
   <ellipse cx="395" cy="553.1" rx="3.8" ry="2.4"/>
   <circle cx="654.9" cy="520.5" r="3"/>
   <ellipse cx="657" cy="534.5" rx="4.5" ry="2.6" transform="rotate(-12 657 534.5)"/>
  </g>
  <g id="txt">
   <path id="lt1" d="M433.3 333.2 L438.7 303 M430.9 303.4 L442.1 301 M431.8 334.2 L439.6 332.2 M437.7 322 L446 319 M450.9 328.8 L457.7 327.4
   M476.8 302.5 L478.2 299 L469.9 297.1 M487.5 320 L483.6 293.7 M480.7 293.7 L487.5 292.2 M485.5 321.5 L493.4 319.5 M485.5 293.2 L502.1 316.1 L507 288.8 M503.1 289.3 L510.9 287.8 M508 289.3 L514.8 314.7 M510.9 316.6 L518.8 314.2
   M520.6 286.6 L525 313 M518.7 287.1 L534.8 283.2 L534.3 288.1 M522.6 299.3 L531.9 296.9 M523.6 313.5 L541.6 309.1 L541.1 305.2
   M563.6 286.1 L567.5 280.7 M567 301.3 L569.5 304.7"/>
   <path id="lt2" d="M438.7 302.5 L454.3 327.9 M476.8 302.5 C474 296 468 294.5 463 297 C457 300 456 309 458 315 C460 321 466 323.5 471 322 C475 321 478 319 479.7 317.1
   M566.5 280.7 C563 279 559 279 556 281.5 C551 286 550 295 552 301 C554 307 558 309.5 562 309 C566 308.5 568 305 569 302.7
   M583.1 277.9 C578 278 574.8 284 574.8 292.5 C574.8 301 578 307 583.1 307.1 C588 307 591.4 301 591.4 292.5 C591.4 284 588 277.9 583.1 277.9 Z"/>
  </g>
 </defs>
 <g fill="none" stroke-linecap="round" stroke-linejoin="round">
  <use href="#ln" stroke="#f23c3c" stroke-width="4.3"/>
  <use href="#cp" stroke="#f23c3c" stroke-width="4.3"/>
  <use href="#dots" stroke="#f23c3c" stroke-width="3"/>
  <use href="#ht" stroke="#f23c3c" stroke-width="3.2"/>
  <use href="#lt1" stroke="#f23c3c" stroke-width="4.1"/>
  <use href="#lt2" stroke="#f23c3c" stroke-width="4.9"/>
  <use href="#ln" stroke="#000" stroke-width="2.3"/>
  <use href="#gl" stroke="#f23c3c" stroke-width="2.4"/>
  <use href="#gl" stroke="#000" stroke-width="1.3"/>
  <use href="#cp" stroke="#000" stroke-width="2.2"/>

  <use href="#ci" stroke="#000" stroke-width="2.8"/>
  <use href="#dots" stroke="#000" stroke-width="1.6"/>
  <use href="#ht" stroke="#000" stroke-width="1.9"/>
  <use href="#lt1" stroke="#000" stroke-width="2.3"/>
  <use href="#lt2" stroke="#000" stroke-width="3.2"/>
 </g>
 <ellipse cx="411.6" cy="549.9" rx="3.9" ry="2.9" fill="#000" stroke="#f23c3c" stroke-width="0.8"/>
 <circle cx="594.8" cy="304.5" r="2" fill="#000" stroke="#f23c3c" stroke-width="0.6"/>
 <circle cx="422.8" cy="350.2" r="2.6" fill="#000"/>
</svg>
<svg class="a" style="left:0;top:0" width="1024" height="722">
 <rect x="189.8" y="142.8" width="714.2" height="522.9" fill="none" stroke="#cc3b3b" stroke-width="1.8"/>
 <g fill="#fff" stroke="#e04848" stroke-width="1">
  <rect x="188.2" y="141.25" width="3" height="3"/><rect x="545.35" y="141.25" width="3" height="3"/><rect x="902.5" y="141.25" width="3" height="3"/>
  <rect x="188.2" y="402.75" width="3" height="3"/><rect x="902.5" y="402.75" width="3" height="3"/>
  <rect x="188.2" y="664.25" width="3" height="3"/><rect x="545.35" y="664.25" width="3" height="3"/><rect x="902.5" y="664.25" width="3" height="3"/>
 </g>
</svg>


</body></html>
